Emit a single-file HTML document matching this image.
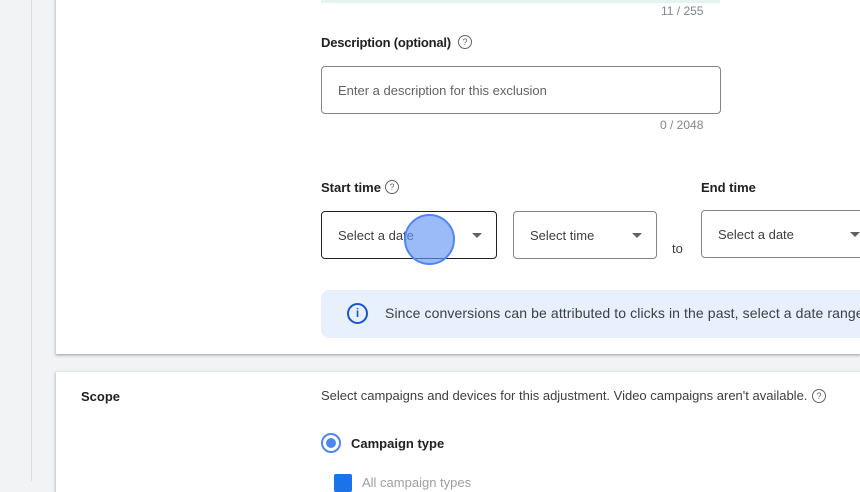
<!DOCTYPE html>
<html><head><style>
*{margin:0;padding:0;box-sizing:border-box}
body{width:860px;height:481px;overflow:hidden;background:#f1f3f4;font-family:"Liberation Sans",Roboto,sans-serif;position:relative;color:#202124}
.abs{position:absolute}
.card{position:absolute;left:56px;right:0;background:#fff;box-shadow:0 1px 2px rgba(60,64,67,.3),0 1px 3px 1px rgba(60,64,67,.15)}
.lbl{font-size:13px;font-weight:bold;color:#202124}
.box{position:absolute;border:1px solid #80868b;border-radius:4px;background:#fff;font-size:13px;color:#3c4043;padding-left:16px;display:flex;align-items:center}
.arr{position:absolute;right:14px;top:50%;margin-top:-2px;width:0;height:0;border-left:5px solid transparent;border-right:5px solid transparent;border-top:5px solid #5f6368}
.help{position:absolute;width:14px;height:14px;border:1.3px solid #5f6368;border-radius:50%;font-size:9px;line-height:12px;text-align:center;color:#5f6368;font-weight:normal}
.cnt{font-size:12px;color:#80868b;position:absolute}
</style></head><body>
<div class="abs" style="left:0;top:0;width:32px;height:481px;background:#f1f3f4;border-right:1px solid #dadce0"></div>
<div class="card" style="top:-5px;height:359px"></div>
<div class="card" style="top:372px;height:120px"></div>
<div class="abs" style="left:321px;top:0;width:399px;height:3px;background:#e6f4f1"></div>
<div class="cnt" style="left:661px;top:4px">11 / 255</div>
<div class="abs lbl" style="left:321px;top:35px;letter-spacing:-0.2px">Description (optional)</div>
<div class="help" style="left:458px;top:35px">?</div>
<div class="box" style="left:321px;top:66px;width:400px;height:48px;color:#5f6368">Enter a description for this exclusion</div>
<div class="cnt" style="left:660px;top:118px">0 / 2048</div>
<div class="abs lbl" style="left:321px;top:180px">Start time</div>
<div class="help" style="left:385px;top:180px">?</div>
<div class="abs lbl" style="left:701px;top:180px">End time</div>
<div class="box" style="left:321px;top:211px;width:176px;height:48px;border-color:#202124">Select a date<div class="arr"></div></div>
<div class="box" style="left:513px;top:211px;width:144px;height:48px">Select time<div class="arr"></div></div>
<div class="abs" style="left:672px;top:241px;font-size:13px;color:#3c4043">to</div>
<div class="box" style="left:701px;top:210px;width:180px;height:48px">Select a date<div class="arr" style="right:20px"></div></div>
<div class="abs" style="left:404px;top:214px;width:51px;height:51px;border-radius:50%;background:rgba(100,150,245,.65);border:2px solid #4f86f0"></div>
<div class="abs" style="left:321px;top:290px;width:560px;height:48px;background:#e8f0fe;border-radius:8px"></div>
<div class="abs" style="left:347px;top:303px;width:21px;height:21px;border:2px solid #1a56c4;border-radius:50%;color:#1a56c4;font-size:12px;font-weight:bold;text-align:center;line-height:17px">i</div>
<div class="abs" style="left:385px;top:305px;font-size:14px;color:#3c4043;white-space:nowrap;letter-spacing:0.1px">Since conversions can be attributed to clicks in the past, select a date range</div>
<div class="abs lbl" style="left:81px;top:389px">Scope</div>
<div class="abs" style="left:321px;top:388px;font-size:13px;color:#3c4043;white-space:nowrap">Select campaigns and devices for this adjustment. Video campaigns aren't available.</div>
<div class="help" style="left:812px;top:389px">?</div>
<div class="abs" style="left:321px;top:433px;width:20px;height:20px;border:2px solid #4f86f0;border-radius:50%"></div>
<div class="abs" style="left:326px;top:438px;width:10px;height:10px;background:#4f86f0;border-radius:50%"></div>
<div class="abs lbl" style="left:351px;top:436px">Campaign type</div>
<div class="abs" style="left:334px;top:474px;width:18px;height:18px;background:#1a73e8;border-radius:2px"></div>
<div class="abs" style="left:362px;top:475px;font-size:13px;color:#9aa0a6">All campaign types</div>
</body></html>
